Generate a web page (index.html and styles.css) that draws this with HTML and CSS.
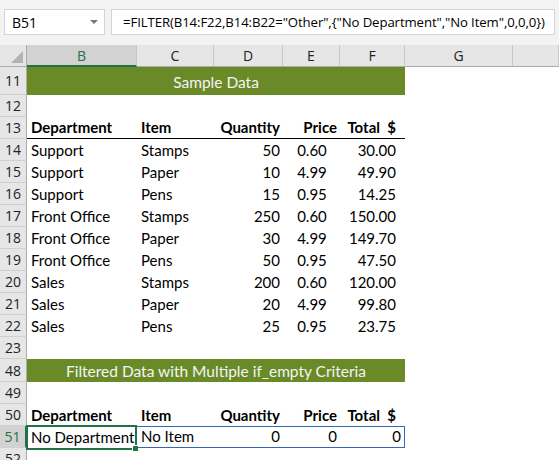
FILE: index.html
```html
<!DOCTYPE html>
<html lang="en">
<head>
    <meta charset="UTF-8">
    <title>FILTER - if_empty</title>
    <link rel="stylesheet" href="styles.css">
</head>
<body>
    <div class="topbar">
        <div class="namebox">
            <span>B51</span>
            <span class="arrow"></span>
        </div>
        <div class="formula">=FILTER(B14:F22,B14:B22="Other",{"No Department","No Item",0,0,0})</div>
    </div>

    <div class="sheet">
        <div class="colheads">
            <div class="corner"><span class="tri"></span></div>
            <div class="ch active">B</div>
            <div class="ch">C</div>
            <div class="ch">D</div>
            <div class="ch">E</div>
            <div class="ch">F</div>
            <div class="ch">G</div>
            <div class="ch"></div>
        </div>

        <div class="row tall">
            <div class="rh">11</div>
            <div class="title">Sample Data</div>
            <div class="c"></div><div class="c"></div>
        </div>
        <div class="row"><div class="rh">12</div></div>
        <div class="row head">
            <div class="rh">13</div>
            <div class="c b">Department</div>
            <div class="c b">Item</div>
            <div class="c b r">Quantity</div>
            <div class="c b r">Price</div>
            <div class="c b r total">Total&nbsp;&nbsp;$</div>
        </div>

        <div id="data"></div>

        <div class="row"><div class="rh">23</div></div>
        <div class="row mid">
            <div class="rh">48</div>
            <div class="title">Filtered Data with Multiple if_empty Criteria</div>
        </div>
        <div class="row"><div class="rh">49</div></div>
        <div class="row">
            <div class="rh">50</div>
            <div class="c b">Department</div>
            <div class="c b">Item</div>
            <div class="c b r">Quantity</div>
            <div class="c b r">Price</div>
            <div class="c b r total">Total&nbsp;&nbsp;$</div>
        </div>
        <div class="row spill">
            <div class="rh active">51</div>
            <div class="c sel">No Department<span class="handle"></span></div>
            <div class="c">No Item</div>
            <div class="c r">0</div>
            <div class="c r">0</div>
            <div class="c r last">0</div>
        </div>
        <div class="row"><div class="rh">52</div></div>
    </div>

    <script>
        var rows = [
            ['Support', 'Stamps', 50, 0.60],
            ['Support', 'Paper', 10, 4.99],
            ['Support', 'Pens', 15, 0.95],
            ['Front Office', 'Stamps', 250, 0.60],
            ['Front Office', 'Paper', 30, 4.99],
            ['Front Office', 'Pens', 50, 0.95],
            ['Sales', 'Stamps', 200, 0.60],
            ['Sales', 'Paper', 20, 4.99],
            ['Sales', 'Pens', 25, 0.95]
        ];

        var html = '';
        rows.forEach(function (d, i) {
            html += '<div class="row">' +
                '<div class="rh">' + (14 + i) + '</div>' +
                '<div class="c">' + d[0] + '</div>' +
                '<div class="c">' + d[1] + '</div>' +
                '<div class="c r">' + d[2] + '</div>' +
                '<div class="c mid-num">' + d[3].toFixed(2) + '</div>' +
                '<div class="c r total">' + (d[2] * d[3]).toFixed(2) + '</div>' +
                '</div>';
        });
        document.getElementById('data').innerHTML = html;
    </script>
</body>
</html>
```

FILE: styles.css
```css
body {
    margin: 0;
    width: 559px;
    height: 460px;
    overflow: hidden;
    background: #fff;
    font-family: Lato, "Noto Sans", sans-serif;
    color: #000;
}

.topbar {
    height: 45px;
    background: #f3f3f3;
    display: flex;
    align-items: flex-start;
    padding: 9px 0 0 4px;
    box-sizing: border-box;
    gap: 6px;
    font-family: "Open Sans", sans-serif;
    font-size: 14px;
}

.namebox,
.formula {
    height: 26px;
    background: #fff;
    border: 1px solid #d4d4d4;
    box-sizing: border-box;
    display: flex;
    align-items: center;
}

.namebox {
    width: 101px;
    padding: 0 0 0 7px;
    justify-content: space-between;
}

.arrow {
    width: 0;
    height: 0;
    margin-right: 6px;
    border-left: 4px solid transparent;
    border-right: 4px solid transparent;
    border-top: 4px solid #777;
}

.formula {
    flex: 1;
    padding-left: 11px;
    margin-right: 4px;
    white-space: nowrap;
    overflow: hidden;
    font-size: 13.2px;
    letter-spacing: -0.1px;
}

.sheet {
    width: 559px;
}

.colheads,
.row {
    display: grid;
    grid-template-columns: 27px 110px 77px 69px 57px 65px 108px 46px;
}

.colheads {
    height: 21px;
    background: #e6e6e6;
    border-bottom: 1px solid #ababab;
    font-family: "Open Sans", sans-serif;
    font-size: 14px;
    color: #222;
}

.corner {
    position: relative;
    border-right: 1px solid #ababab;
}

.tri {
    position: absolute;
    right: 3px;
    bottom: 3px;
    width: 0;
    height: 0;
    border-left: 12px solid transparent;
    border-bottom: 12px solid #b4b4b4;
}

.ch {
    border-right: 1px solid #c8c8c8;
    display: flex;
    align-items: center;
    justify-content: center;
}

.ch.active {
    background: #d2d2d2;
    color: #217346;
    border-bottom: 2px solid #217346;
    margin-bottom: -1px;
}

.row {
    height: 22px;
    font-size: 15px;
}

.row.tall {
    height: 28px;
}

.row.mid {
    height: 23px;
}

.rh {
    background: #e6e6e6;
    border-right: 1px solid #ababab;
    border-bottom: 1px solid #d0d0d0;
    font-family: "Open Sans", sans-serif;
    font-size: 14px;
    color: #222;
    display: flex;
    align-items: center;
    justify-content: center;
}

.rh.active {
    background: #d2d2d2;
    color: #217346;
    border-right: 2px solid #217346;
}

.title {
    grid-column: 2 / 7;
    background: #6a8a28;
    color: #f4f4f4;
    font-size: 15.5px;
    display: flex;
    align-items: center;
    justify-content: center;
    padding-top: 1px;
}

.c {
    display: flex;
    align-items: flex-end;
    padding: 0 3px 2px 4px;
    white-space: nowrap;
    position: relative;
}

.c.b {
    font-weight: bold;
}

.c.r {
    justify-content: flex-end;
}

.c.mid-num {
    justify-content: center;
}

.c.total {
    padding-right: 9px;
}

.head .c {
    border-bottom: 1px solid #000;
}

.spill .c {
    border-top: 1px solid #3565b3;
    border-bottom: 1px solid #3565b3;
}

.spill .c.last {
    border-right: 1px solid #3565b3;
    padding-right: 3px;
}

.spill .c.sel {
    border: 2px solid #217346;
    margin: -1px 0 -2px -1px;
    padding-left: 3px;
}

.handle {
    position: absolute;
    right: -4px;
    bottom: -4px;
    width: 5px;
    height: 5px;
    background: #217346;
    border: 1px solid #fff;
}
```
